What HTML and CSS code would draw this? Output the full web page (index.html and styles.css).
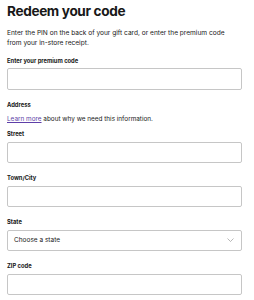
FILE: index.html
```html
<!DOCTYPE html>
<html lang="en">
<head>
    <meta charset="UTF-8">
    <meta name="viewport" content="width=device-width, initial-scale=1.0">
    <title>Redeem your code</title>
    <link rel="stylesheet" href="styles.css">
</head>
<body>
    <div class="page">
        <h1>Redeem your code</h1>
        <p class="intro">Enter the PIN on the back of your gift card, or enter the premium code from your in-store receipt.</p>

        <label class="field-label" for="code">Enter your premium code</label>
        <input class="text-input" type="text" id="code">

        <h2 class="section-label">Address</h2>
        <p class="note"><a href="#">Learn more</a> about why we need this information.</p>

        <label class="field-label" for="street">Street</label>
        <input class="text-input" type="text" id="street">

        <label class="field-label" for="city">Town/City</label>
        <input class="text-input" type="text" id="city">

        <label class="field-label" for="state">State</label>
        <div class="select-box" id="state">
            <span>Choose a state</span>
            <svg class="chevron" width="7" height="4" viewBox="0 0 7 4">
                <path d="M0.5 0.5 L3.5 3.5 L6.5 0.5" fill="none" stroke="#9a9a9a" stroke-width="0.7"/>
            </svg>
        </div>

        <label class="field-label" for="zip">ZIP code</label>
        <input class="text-input" type="text" id="zip">
    </div>
</body>
</html>
```

FILE: styles.css
```css
body {
    margin: 0;
    padding: 0;
    background-color: white;
    font-family: Inter, "Liberation Sans", sans-serif;
    color: #181818;
}
.page {
    padding: 2px 12px 0 7px;
}
h1 {
    margin: 0;
    font-size: 13.6px;
    font-weight: 700;
    letter-spacing: -0.35px;
    line-height: 18px;
}
.intro {
    max-width: 226px;
    margin: 9px 0 0 0;
    font-size: 6.6px;
    line-height: 9.5px;
}
.field-label, .section-label {
    display: block;
    margin: 8.5px 0 0 0;
    font-size: 5.8px;
    font-weight: 700;
    line-height: 8px;
}
.text-input + .field-label,
.text-input + .section-label,
.select-box + .field-label {
    margin-top: 11px;
}
.note {
    margin: 6.5px 0 0 0;
    font-size: 6.4px;
    line-height: 9px;
}
.note + .field-label {
    margin-top: 6px;
}
.note a {
    color: #5e3fa8;
}
.text-input, .select-box {
    display: block;
    box-sizing: border-box;
    width: 100%;
    height: 21.5px;
    margin: 3.5px 0 0 0;
    border: 1px solid #c6c6c6;
    border-radius: 2px;
    background-color: white;
}
.select-box {
    display: flex;
    align-items: center;
    justify-content: space-between;
    padding: 0 7px 0 6px;
    font-size: 6.5px;
}
```
